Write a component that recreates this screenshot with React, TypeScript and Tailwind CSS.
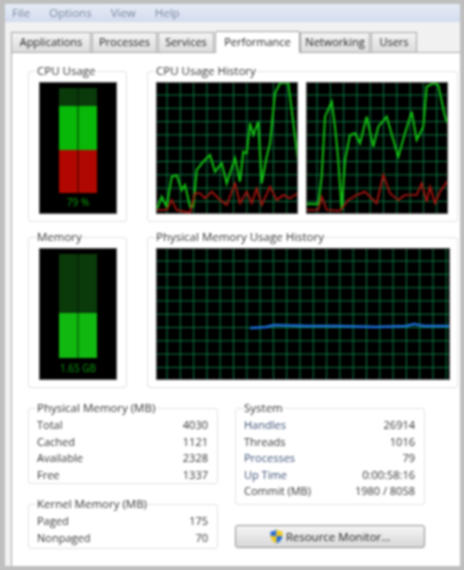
import React from "react";

const cpuOneGreen = [[410,450],[425,410],[440,440],[455,350],[470,345],[485,390],[495,375],[510,440],[520,440],[530,330],[550,305],[570,285],[585,335],[605,310],[620,370],[645,295],[660,365],[670,275],[680,280],[690,190],[700,225],[715,185],[725,370],[740,290],[750,250],[765,100],[780,70],[805,68],[815,150],[825,230],[835,310]];
const cpuOneRed = [[410,450],[440,450],[455,420],[470,450],[510,458],[525,400],[540,400],[555,415],[575,395],[595,415],[620,435],[645,370],[660,430],[680,395],[695,430],[710,385],[725,435],[750,380],[770,420],[790,405],[810,415],[833,400]];
const cpuTwoGreen = [[50,432],[85,432],[95,350],[105,170],[125,125],[135,200],[145,300],[155,450],[165,300],[180,225],[195,220],[210,250],[230,170],[250,260],[265,200],[290,170],[310,240],[325,290],[345,220],[365,155],[380,240],[400,200],[410,80],[430,70],[445,75],[465,170],[475,195]];
const cpuTwoRed = [[50,450],[85,450],[95,410],[110,450],[150,452],[175,420],[200,405],[225,395],[260,430],[280,345],[300,400],[325,420],[345,405],[380,405],[395,370],[410,425],[420,380],[435,430],[450,395],[475,360]];

// traced from a 3x crop, so scale back down to graph pixels
const toPoints = (pts: number[][], ox: number, oy: number) =>
  pts.map(([x, y]) => `${((x - ox) / 3).toFixed(1)},${((y - oy) / 3).toFixed(1)}`).join(" ");

const Graph = ({ width, children }: { width: number; children?: React.ReactNode }) => {
  const verticals = [];
  for (let x = 11; x < width; x += 13.3) verticals.push(x);
  const horizontals = [];
  for (let y = 13; y < 132; y += 13.3) horizontals.push(y);
  return (
    <svg width={width} height={132} className="block shrink-0 bg-black">
      {verticals.map((x) => (
        <line key={x} x1={x} x2={x} y1={0} y2={132} stroke="#0c7a42" strokeWidth={1} />
      ))}
      {horizontals.map((y) => (
        <line key={y} x1={0} x2={width} y1={y} y2={y} stroke="#0c7a42" strokeWidth={1} />
      ))}
      {children}
      <rect x={0.5} y={0.5} width={width - 1} height={131} fill="none" stroke="#555" />
    </svg>
  );
};

const Segment = ({ h, color, sep }: { h: string; color: string; sep: string }) => (
  <div className={`flex ${h}`}>
    <div className={`flex-1 ${color}`} />
    <div className={`w-[2px] ${sep}`} />
    <div className={`flex-1 ${color}`} />
  </div>
);

const Group = ({ title, className, children }: { title: string; className: string; children: React.ReactNode }) => (
  <fieldset className={`border border-[#e2e2e2] rounded-[3px] min-w-0 ${className}`}>
    <legend className="ml-[7px] px-[1px] leading-[14px] text-[11.5px] text-[#333]">{title}</legend>
    {children}
  </fieldset>
);

const Row = ({ label, value, labelColor = "text-[#333]" }: { label: string; value: string; labelColor?: string }) => (
  <div className="flex justify-between leading-[16.5px]">
    <span className={labelColor}>{label}</span>
    <span className="text-[#333]">{value}</span>
  </div>
);

const tabs = [
  { name: "Applications", w: "w-[80px]" },
  { name: "Processes", w: "w-[65px]" },
  { name: "Services", w: "w-[56px]" },
  { name: "Performance", w: "w-[85px]", active: true },
  { name: "Networking", w: "w-[70px]" },
  { name: "Users", w: "w-[46px]" },
];

export default function App() {
  return (
    <div
      className="w-[464px] h-[570px] overflow-hidden bg-[#bfbfbf] pt-1 pb-1 pl-[5px] pr-1 text-[11px]"
      style={{ fontFamily: '"Open Sans", "Liberation Sans", sans-serif' }}
    >
      <div className="h-full flex flex-col bg-[#f1f1f1] blur-[0.9px]">
        {/* Menu */}
        <div className="h-[18px] shrink-0 flex items-center gap-[17px] pl-[7px] bg-gradient-to-b from-[#e6ebf5] to-[#d3dcef] text-[11.5px] text-[#7b889f]">
          <span>File</span>
          <span className="ml-[2px]">Options</span>
          <span className="ml-[2px]">View</span>
          <span className="ml-[2px]">Help</span>
        </div>

        {/* Tabs */}
        <div className="h-[30px] shrink-0 flex items-end pl-[6px]">
          {tabs.map((t) =>
            t.active ? (
              <div
                key={t.name}
                className={`${t.w} h-[22px] -mb-px z-10 flex items-center justify-center bg-white border border-b-0 border-[#a0a0a0] rounded-t-[2px] text-[#222]`}
              >
                {t.name}
              </div>
            ) : (
              <div
                key={t.name}
                className={`${t.w} h-[20px] mr-px flex items-center justify-center bg-gradient-to-b from-[#f4f4f4] to-[#dcdcdc] border border-b-0 border-[#a4a4a4] text-[#222]`}
              >
                {t.name}
              </div>
            ),
          )}
        </div>

        {/* Performance page */}
        <div className="flex-1 ml-[6px] bg-white border-l border-t border-[#a8a8a8] pl-[16px] pt-[11px] flex flex-col text-[11px]">
          <div className="flex gap-[20px]">
            <Group title="CPU Usage" className="w-[99px] h-[158px]">
              <div className="pl-[10px] pt-[4px]">
                <div className="w-[78px] h-[132px] bg-black border border-[#555] flex flex-col items-center pt-[5px]">
                  <div className="w-[38px]">
                    <Segment h="h-[18px]" color="bg-[#0a3a0a]" sep="bg-[#062806]" />
                    <Segment h="h-[44px]" color="bg-[#08b808]" sep="bg-[#067006]" />
                    <Segment h="h-[43px]" color="bg-[#b00800]" sep="bg-[#700500]" />
                  </div>
                  <span className="mt-[2px] text-[10px] leading-[14px] text-[#0aa00a]">79 %</span>
                </div>
              </div>
            </Group>
            <Group title="CPU Usage History" className="w-[311px] h-[158px]">
              <div className="flex gap-[8px] pl-[8px] pt-[4px]">
                <Graph width={142}>
                  <polyline points={toPoints(cpuOneGreen, 408, 66)} fill="none" stroke="#12c012" strokeWidth={2} />
                  <polyline points={toPoints(cpuOneRed, 408, 66)} fill="none" stroke="#b81410" strokeWidth={1.6} />
                </Graph>
                <Graph width={142}>
                  <polyline points={toPoints(cpuTwoGreen, 48, 66)} fill="none" stroke="#12c012" strokeWidth={2} />
                  <polyline points={toPoints(cpuTwoRed, 48, 66)} fill="none" stroke="#b81410" strokeWidth={1.6} />
                </Graph>
              </div>
            </Group>
          </div>

          <div className="flex gap-[20px] mt-[8px]">
            <Group title="Memory" className="w-[99px] h-[158px]">
              <div className="pl-[10px] pt-[4px]">
                <div className="w-[78px] h-[132px] bg-black border border-[#555] flex flex-col items-center pt-[5px]">
                  <div className="w-[38px]">
                    <Segment h="h-[59px]" color="bg-[#0a3a0a]" sep="bg-[#062806]" />
                    <Segment h="h-[45px]" color="bg-[#10b810]" sep="bg-[#0a7a0a]" />
                  </div>
                  <span className="mt-[3px] text-[10px] leading-[14px] text-[#0aa00a]">1.65 GB</span>
                </div>
              </div>
            </Group>
            <Group title="Physical Memory Usage History" className="w-[311px] h-[158px]">
              <div className="pl-[8px] pt-[4px]">
                <Graph width={294}>
                  <polyline
                    points="94,80 110,79 118,77 150,78 180,78 220,79 250,78 258,76 268,78 294,78"
                    fill="none"
                    stroke="#1a6fd8"
                    strokeWidth={2.6}
                  />
                </Graph>
              </div>
            </Group>
          </div>

          <div className="flex gap-[17px] mt-[13px]">
            <div className="w-[190px] flex flex-col gap-[13px]">
              <Group title="Physical Memory (MB)" className="h-[83px]">
                <div className="pl-[8px] pr-[9px] pt-[2px]">
                  <Row label="Total" value="4030" />
                  <Row label="Cached" value="1121" />
                  <Row label="Available" value="2328" />
                  <Row label="Free" value="1337" />
                </div>
              </Group>
              <Group title="Kernel Memory (MB)" className="h-[52px]">
                <div className="pl-[8px] pr-[9px] pt-[2px]">
                  <Row label="Paged" value="175" />
                  <Row label="Nonpaged" value="70" />
                </div>
              </Group>
            </div>
            <div className="w-[190px] flex flex-col">
              <Group title="System" className="h-[104px]">
                <div className="pl-[8px] pr-[9px] pt-[2px]">
                  <Row label="Handles" value="26914" labelColor="text-[#3a4f74]" />
                  <Row label="Threads" value="1016" />
                  <Row label="Processes" value="79" labelColor="text-[#3a4f74]" />
                  <Row label="Up Time" value="0:00:58:16" labelColor="text-[#3a4f74]" />
                  <Row label="Commit (MB)" value="1980 / 8058" />
                </div>
              </Group>
              <button className="mt-[20px] h-[23px] flex items-center justify-center gap-[3px] border border-[#8f8f8f] rounded-[3px] bg-gradient-to-b from-[#f5f5f5] to-[#d8d8d8] text-[11.5px] text-[#222]">
                <svg width="13" height="15" viewBox="0 0 13 15">
                  <path d="M6.5 0.5 L6.5 7 L0.5 7 L0.5 2.5 Q4 2.5 6.5 0.5 Z" fill="#2f6fd0" />
                  <path d="M6.5 0.5 Q9 2.5 12.5 2.5 L12.5 7 L6.5 7 Z" fill="#f2c81e" />
                  <path d="M0.5 7 L6.5 7 L6.5 14.5 Q1.5 12.5 0.5 7 Z" fill="#f2c81e" />
                  <path d="M6.5 7 L12.5 7 Q11.5 12.5 6.5 14.5 Z" fill="#2f6fd0" />
                </svg>
                <span>Resource Monitor...</span>
              </button>
            </div>
          </div>
        </div>
      </div>
    </div>
  );
}
